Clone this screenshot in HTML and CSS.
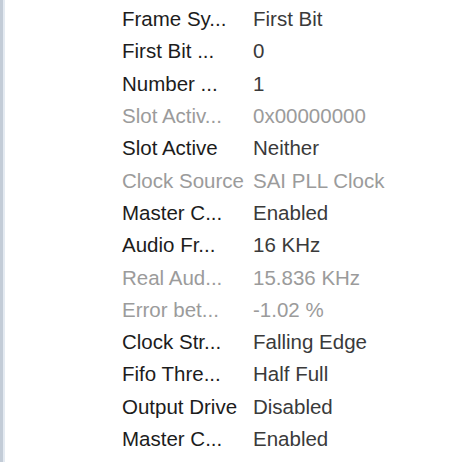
FILE: index.html
```html
<!DOCTYPE html>
<html lang="en">
<head>
    <meta charset="UTF-8">
    <title>Parameter Settings</title>
    <link rel="stylesheet" href="styles.css">
</head>
<body>
    <div class="panel">
        <div class="props">
            <div class="row"><span class="key">Frame Sy...</span><span class="val">First Bit</span></div>
            <div class="row"><span class="key">First Bit ...</span><span class="val">0</span></div>
            <div class="row"><span class="key">Number ...</span><span class="val">1</span></div>
            <div class="row off"><span class="key">Slot Activ...</span><span class="val">0x00000000</span></div>
            <div class="row"><span class="key">Slot Active</span><span class="val">Neither</span></div>
            <div class="row off"><span class="key">Clock Source</span><span class="val">SAI PLL Clock</span></div>
            <div class="row"><span class="key">Master C...</span><span class="val">Enabled</span></div>
            <div class="row"><span class="key">Audio Fr...</span><span class="val">16 KHz</span></div>
            <div class="row off"><span class="key">Real Aud...</span><span class="val">15.836 KHz</span></div>
            <div class="row off"><span class="key">Error bet...</span><span class="val">-1.02 %</span></div>
            <div class="row"><span class="key">Clock Str...</span><span class="val">Falling Edge</span></div>
            <div class="row"><span class="key">Fifo Thre...</span><span class="val">Half Full</span></div>
            <div class="row"><span class="key">Output Drive</span><span class="val">Disabled</span></div>
            <div class="row"><span class="key">Master C...</span><span class="val">Enabled</span></div>
        </div>
    </div>
</body>
</html>
```

FILE: styles.css
```css
body {
    margin: 0;
    background: #ffffff;
    font-family: "Liberation Sans", Arial, sans-serif;
}
.panel {
    height: 462px;
    border-left: 3px solid #c3ccd7;
    box-shadow: inset 2px 0 0 #e4eaf1;
    padding: 3px 0 0 119px;
    box-sizing: border-box;
}
.props {
    display: flex;
    flex-direction: column;
}
.row {
    display: grid;
    grid-template-columns: 131px auto;
    height: 32.3px;
    align-items: center;
    font-size: 20.5px;
    white-space: nowrap;
}
.key {
    color: #1c1c1c;
}
.val {
    color: #3a3a3a;
}
.row.off .key,
.row.off .val {
    color: #9b9b9b;
}
```
